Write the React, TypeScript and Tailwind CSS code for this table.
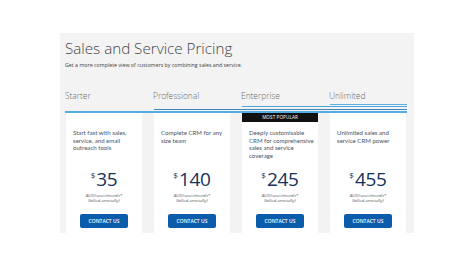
const PLANS = [
  { name: 'Starter', desc: 'Start fast with sales, service, and email outreach tools', price: '35' },
  { name: 'Professional', desc: 'Complete CRM for any size team', price: '140' },
  { name: 'Enterprise', desc: 'Deeply customisable CRM for comprehensive sales and service coverage', price: '245', popular: true },
  { name: 'Unlimited', desc: 'Unlimited sales and service CRM power', price: '455' },
];

const FONT = { fontFamily: '"Open Sans", "Liberation Sans", sans-serif' };
const BODY = { fontFamily: 'Lato, "Open Sans", sans-serif' };

export default function App() {
  return (
    <div className="w-[474px] h-[266px] bg-white pt-[33px] pl-[60px]" style={FONT}>
      <div className="w-[354px] h-[200px] bg-[#f3f3f3] overflow-hidden">
        <div className="pl-[5px] pt-[5px]">
          <h1 className="text-[15.2px] leading-[20px] font-light text-[#444444]">
            Sales and Service Pricing
          </h1>
          <p className="mt-[4px] text-[5.3px] leading-[7px] text-[#3e3e3c]">
            Get a more complete view of customers by combining sales and service.
          </p>
        </div>

        <div className="relative mt-[22px] h-[22px]">
          <div className="grid grid-cols-[76px_76px_76px_76px] gap-x-[12px] pl-[5px]">
            {PLANS.map((p) => (
              <div key={p.name} className="text-[8.4px] leading-[10px] text-[#6b6b6b] font-light">
                {p.name}
              </div>
            ))}
          </div>
          <div className="absolute left-[270px] right-[7px] top-[13px] h-px bg-[#5bb1e0]" />
          <div className="absolute left-[182px] right-[7px] top-[15px] h-px bg-[#4aa6dc]" />
          <div className="absolute left-[94px] right-[7px] top-[18px] h-px bg-[#3f86b4]" />
          <div className="absolute left-[5px] right-[7px] top-[20px] h-[2px] bg-[#55aedf]" />
        </div>

        <div className="grid grid-cols-[76px_76px_76px_76px] gap-x-[12px] pl-[6px]">
          {PLANS.map((p) => (
            <div key={p.name} className="relative bg-white h-[122px] pt-[16px] pl-[7px] pr-px flex flex-col">
              {p.popular && (
                <div className="absolute left-0 right-0 top-0 h-[9px] bg-[#111111] text-white text-[4.6px] leading-[9px] text-center tracking-[0.1px]">
                  MOST POPULAR
                </div>
              )}
              <p className="h-[40px] text-[6.1px] leading-[7.6px] text-[#4a5568]" style={BODY}>
                {p.desc}
              </p>
              <div className="flex justify-center items-start text-[#16325c] h-[20px] pr-[6px]">
                <span className="text-[8px] leading-[10px] mt-[1px] mr-[1px]">$</span>
                <span className="text-[19px] leading-[20px] font-normal tracking-[-0.3px]">{p.price}</span>
              </div>
              <div className="mt-[4px] pr-[6px] text-center text-[4.3px] leading-[5px] text-[#555555]">
                <div>AUD/user/month*</div>
                <div>(billed annually)</div>
              </div>
              <div className="mt-[11px] pr-[6px] flex justify-center">
                <button className="w-[48px] h-[14px] rounded-[2px] bg-[#0b5cab] text-white text-[5px] leading-[14px] font-semibold">
                  CONTACT US
                </button>
              </div>
            </div>
          ))}
        </div>
      </div>
    </div>
  );
}
